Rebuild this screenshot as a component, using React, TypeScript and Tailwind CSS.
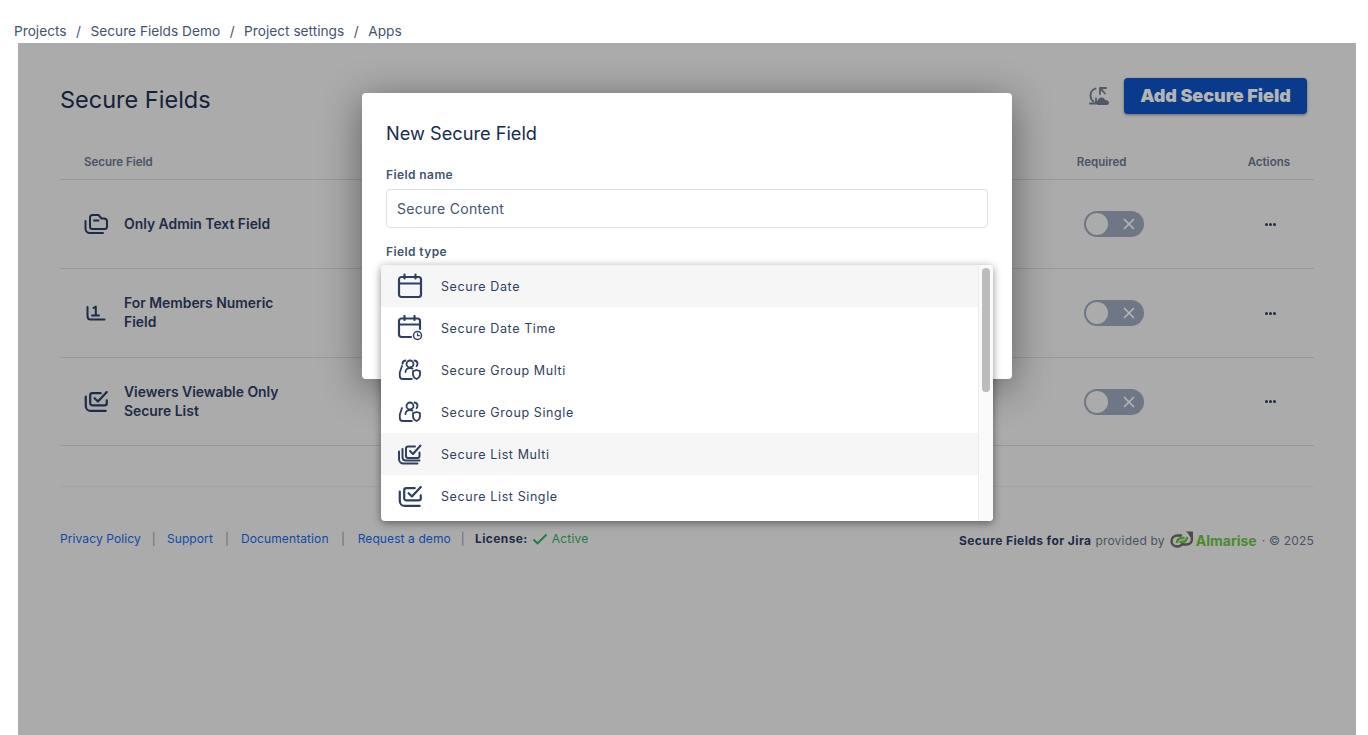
const font = { fontFamily: "Inter, 'Liberation Sans', sans-serif" };

const ListIcon = ({ multi = false }: { multi?: boolean }) => (
  <svg width="24" height="21" viewBox={multi ? "0.5 0.5 24 21" : "0.5 1 21.500 19"} fill="none" stroke="currentColor" strokeWidth="2" strokeLinecap="round" strokeLinejoin="round">
    {multi ? (
      <>
        <path d="M22 9v3.500c0 1.100-.9 2-2 2H10.500c-1.100 0-2-.9-2-2V5c0-1.100.9-2 2-2h7" />
        <path d="M12.500 7.500l3 3 7.500-8.500" />
        <path d="M5 5.500v8c0 2 1.500 3.500 3.500 3.500H22" />
        <path d="M1.500 8v7.500c0 2.500 2 4.500 4.500 4.500h14" />
      </>
    ) : (
      <>
        <path d="M21 9.500v2.500c0 1.100-.9 2-2 2H8c-1.100 0-2-.9-2-2V5c0-1.100.9-2 2-2h7.500" />
        <path d="M10 7.500l3 3 8-8.500" />
        <path d="M2 6v8.500C2 17 4 19 6.500 19H20" />
      </>
    )}
  </svg>
);

const TextIcon = () => (
  <svg width="24" height="20" viewBox="0 0 24 20" fill="none" stroke="currentColor" strokeWidth="2" strokeLinecap="round" strokeLinejoin="round">
    <path d="M6 12.500V3.500C6 2 7 1 8.500 1h6l3 3.500h2.500c1.700 0 3 1.200 3 3v5c0 1.500-1 2.500-2.500 2.500H8.500C7 15 6 14 6 12.500z" />
    <path d="M10 6.500h4.500" />
    <path d="M1.500 7v7.500C1.500 17 3.500 19 6 19h13" />
  </svg>
);

const NumberIcon = () => (
  <svg width="20" height="16" viewBox="0 0 20 16" fill="none" stroke="currentColor" strokeWidth="2" strokeLinecap="round" strokeLinejoin="round">
    <path d="M1.500 2v9c0 2 1.200 3.500 3 3.500h14" />
    <path d="M6 10.500h7" />
    <path d="M7.500 3 9.800 1.500v8.500" />
  </svg>
);

const CalendarIcon = () => (
  <svg width="26" height="26" viewBox="0 0 26 26" fill="none" stroke="currentColor" strokeWidth="2.200" strokeLinecap="round" strokeLinejoin="round">
    <rect x="2" y="4" width="22" height="20" rx="2.500" />
    <path d="M2 10.500h22M7.500 1.500v4M18.500 1.500v4" />
  </svg>
);

const CalendarClockIcon = () => (
  <svg width="26" height="26" viewBox="0 0 26 26" fill="none" stroke="currentColor" strokeWidth="2.200" strokeLinecap="round" strokeLinejoin="round">
    <path d="M14 22H4.500C3 22 2 21 2 19.500V6c0-1.500 1-2.500 2.500-2.500h16C22 3.500 23 4.500 23 6v8" />
    <path d="M2 9.500h21M7.500 1v4M17.500 1v4" />
    <circle cx="20.500" cy="20.500" r="4" strokeWidth="1.500" />
    <path d="M20.500 18.500v2.200h1.800" strokeWidth="1.200" />
  </svg>
);

const GroupIcon = ({ multi = false }: { multi?: boolean }) => (
  <svg width="24" height="22" viewBox="0 0 24 22" fill="none" stroke="currentColor" strokeWidth="1.800" strokeLinecap="round" strokeLinejoin="round">
    <circle cx="12" cy="5" r="3.500" />
    <path d="M7.500 13c0-2.200 2-4 4.500-4 1 0 1.800.2 2.500.6" />
    <path d="M16.500 1.500c1.800.3 3 1.600 3 3.300 0 1-.4 1.800-1 2.400" />
    {multi && <path d="M7.500 1.500C5.700 1.800 4.500 3.100 4.500 4.800" />}
    <path d="M4 7 1.800 13.500v3.500c0 1.800 1.200 3 3 3h9" />
    <path d="M18.500 11l3.500 1.200v3.300c0 2-1.500 3.500-3.500 4.500-2-1-3.500-2.500-3.500-4.500v-3.300z" />
  </svg>
);

const SyncCloudIcon = () => (
  <svg width="22" height="19" viewBox="0 0 22 19" fill="none">
    <path d="M6.500 1.500C3.500 2.500 1.500 5 1.500 8.500c0 2.500 1 4.700 3 6" stroke="currentColor" strokeWidth="1.800" strokeLinecap="round" />
    <path d="M1 16.500h6v-5" stroke="currentColor" strokeWidth="1.800" strokeLinecap="round" strokeLinejoin="round" />
    <path d="M11 1h6M11 1v6M11.500 1.500 16 6.500" stroke="currentColor" strokeWidth="1.800" strokeLinecap="round" />
    <path d="M9.500 18c-1.500 0-2.500-1-2.500-2.300 0-1.200.9-2.100 2-2.200.3-1.800 1.800-3 3.600-3 1.700 0 3.100 1 3.600 2.500 2.200 0 3.800 1.200 3.800 2.700 0 1.300-1 2.300-2.500 2.300z" fill="currentColor" />
  </svg>
);

const LinkLogo = () => (
  <svg width="24" height="18" viewBox="0 0 24 18" fill="none">
    <path d="M11 4.500H7.500C4.500 4.500 1.500 6.500 1.500 10s3 5.500 6 5.500c2.500 0 4-1.200 5-3" stroke="#4b4b4b" strokeWidth="2.400" strokeLinecap="round" />
    <path d="M13 13.500h3.500c3 0 5.500-2 5.500-5.500 0-2-.8-3.300-2-4.300" stroke="#4b4b4b" strokeWidth="2.400" strokeLinecap="round" />
    <path d="M7 11c.5-2.500 2.500-4 5-4h1.500M17 7c-.5 2.500-2.500 4-5 4h-1.500" stroke="#4a8a2c" strokeWidth="2.400" strokeLinecap="round" />
    <path d="M16 .5h7v7z" fill="#4b4b4b" />
  </svg>
);

const rows = [
  { icon: <TextIcon />, name: "Only Admin Text Field", height: "h-[89px]" },
  { icon: <NumberIcon />, name: "For Members Numeric Field", height: "h-[89px]" },
  { icon: <ListIcon />, name: "Viewers Viewable Only Secure List", height: "h-[88px]" },
];

const options = [
  { icon: <CalendarIcon />, label: "Secure Date", active: true },
  { icon: <CalendarClockIcon />, label: "Secure Date Time" },
  { icon: <GroupIcon multi />, label: "Secure Group Multi" },
  { icon: <GroupIcon />, label: "Secure Group Single" },
  { icon: <ListIcon multi />, label: "Secure List Multi", active: true },
  { icon: <ListIcon />, label: "Secure List Single" },
];

const links = [
  { label: "Privacy Policy", gap: "mx-[11px]" },
  { label: "Support", gap: "mx-[12px]" },
  { label: "Documentation", gap: "mx-[12.500px]" },
  { label: "Request a demo", gap: "mx-[10px]" },
];

export default function App() {
  return (
    <div className="relative h-[735px] w-[1368px] overflow-hidden bg-white" style={font}>
      <nav className="flex h-[43px] items-end gap-[9.500px] pb-[3px] pl-[14px] text-[13.700px] leading-[17px] text-[#44546f]">
        <span>Projects</span>
        <span>/</span>
        <span>Secure Fields Demo</span>
        <span>/</span>
        <span>Project settings</span>
        <span>/</span>
        <span>Apps</span>
      </nav>

      <main className="ml-[18px] h-[692px] w-[1338px] bg-[#ababab] pl-[42px] pr-[42px]">
        <header className="flex h-[90px] items-center justify-between pt-[16px]">
          <h1 className="mt-[7px] text-[23.500px] font-normal leading-[28px] text-[#141f3a]">Secure Fields</h1>
          <div className="mr-[7px] flex items-center gap-[13px] text-[#505868]">
            <SyncCloudIcon />
            <button className="flex h-[36px] w-[183px] items-center justify-center rounded-[4px] bg-[#0a3a8c] pb-[2px] text-[18px] font-black tracking-[-0.05px] text-[#b4b4b4] shadow-[0_1px_3px_rgba(0,0,0,0.4)]">
              Add Secure Field
            </button>
          </div>
        </header>

        <div className="flex h-[47px] items-center justify-between border-b border-[#989898] pl-[24px] pr-[24px] pt-[13px] text-[11.500px] font-semibold text-[#4a5365]">
          <span>Secure Field</span>
          <div className="flex items-center">
            <span className="w-[52px] text-center">Required</span>
            <span className="ml-[120px]">Actions</span>
          </div>
        </div>

        {rows.map((row) => (
          <div key={row.name} className={`flex ${row.height} items-center justify-between border-b border-[#989898] pl-[24px] pr-[38px] text-[#1f2b47]`}>
            <div className="flex items-center gap-[16px]">
              <span className="flex w-[24px] justify-center">{row.icon}</span>
              <span className="w-[170px] text-[13.900px] font-semibold leading-[19px]">{row.name}</span>
            </div>
            <div className="flex items-center gap-[121px]">
              <div className="flex h-[26px] w-[60px] items-center justify-between rounded-full bg-[#6f7686] pl-[2px] pr-[9px]">
                <span className="h-[22px] w-[22px] rounded-full bg-[#ababab]" />
                <svg width="12" height="12" viewBox="0 0 12 12" stroke="#b4b4b4" strokeWidth="1.700" strokeLinecap="round">
                  <path d="M1.500 1.500l9 9M10.500 1.500l-9 9" />
                </svg>
              </div>
              <span className="flex gap-[1px]">
                <i className="h-[3px] w-[3px] rounded-full bg-[#1f2b47]" />
                <i className="h-[3px] w-[3px] rounded-full bg-[#1f2b47]" />
                <i className="h-[3px] w-[3px] rounded-full bg-[#1f2b47]" />
              </span>
            </div>
          </div>
        ))}

        <div className="h-[41px] border-b border-[#a2a2a2]" />

        <footer className="flex justify-between pt-[44px] text-[12px] leading-[15px]">
          <div className="-mt-[3px] flex items-center tracking-[0.1px] text-[#0f4aa8]">
            {links.map((link) => (
              <span key={link.label} className="flex items-center">
                <span>{link.label}</span>
                <span className={`${link.gap} text-[#666c78]`}>|</span>
              </span>
            ))}
            <span className="font-bold tracking-[0.4px] text-[#1f2b47]">License:</span>
            <svg className="mx-[4px]" width="16" height="12" viewBox="0 0 16 12" fill="none" stroke="#1f7a45" strokeWidth="1.800">
              <path d="M1.500 6.500l4 4 9-9" />
            </svg>
            <span className="tracking-[0.2px] text-[#1f7a45]">Active</span>
          </div>
          <div className="-mt-[2px] flex items-center pt-[2px] tracking-[0.2px] text-[#4a5365]">
            <span className="font-bold tracking-[0.4px] text-[#1f2b47]">Secure Fields for Jira</span>
            <span className="ml-[4px]">provided by</span>
            <span className="ml-[5px]"><LinkLogo /></span>
            <span className="ml-[2px] text-[14px] font-bold tracking-[0px] text-[#4a8a2c]">Almarise</span>
            <span className="ml-[5px]">· © 2025</span>
          </div>
        </footer>
      </main>

      <section className="absolute left-[362px] top-[93px] h-[286px] w-[650px] rounded-[4px] bg-white px-[24px] pt-[28px] shadow-[0_8px_40px_rgba(0,0,0,0.45)]">
        <h2 className="text-[18.200px] font-normal leading-[24px] text-[#172b4d]">New Secure Field</h2>
        <label className="mt-[22px] block text-[12px] font-semibold leading-[16px] tracking-[0.4px] text-[#44546f]">Field name</label>
        <div className="mt-[6px] flex h-[39px] items-center rounded-[4px] border border-[#dcdfe4] px-[10px] text-[14px] tracking-[0.3px] text-[#44546f]">
          Secure Content
        </div>
        <label className="mt-[16px] block text-[12px] font-semibold leading-[16px] tracking-[0.4px] text-[#44546f]">Field type</label>
      </section>

      <section className="absolute left-[381px] top-[265px] h-[256px] w-[612px] overflow-hidden rounded-[4px] bg-white shadow-[0_2px_8px_rgba(0,0,0,0.45)]">
        <div className="w-[597px]">
          {options.map((option) => (
            <div key={option.label} className={`flex h-[42px] items-center gap-[18px] pl-[16px] text-[12.500px] tracking-[0.6px] text-[#2f3f60] ${option.active ? "bg-[#f6f6f6]" : ""}`}>
              <span className="flex w-[26px] justify-center">{option.icon}</span>
              <span className="pt-[2px]">{option.label}</span>
            </div>
          ))}
        </div>
        <div className="absolute bottom-0 right-0 top-0 w-[15px] border-l border-[#ececec] bg-[#fafafa]">
          <div className="ml-[3px] mt-[3px] h-[124px] w-[8px] rounded-full bg-[#bcbcbc]" />
        </div>
      </section>
    </div>
  );
}
